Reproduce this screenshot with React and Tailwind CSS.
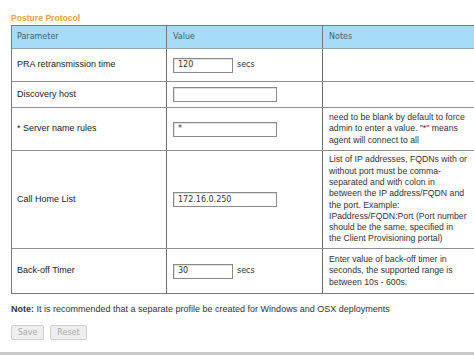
const rows = [
  { label: 'PRA retransmission time', h: 'h-[33px]', input: '120', w: 'w-[60px]', secs: true, notes: null },
  { label: 'Discovery host', h: 'h-[26px]', input: '', w: 'w-[104px]', notes: null },
  {
    label: '* Server name rules',
    h: 'h-[43px]',
    input: '*',
    w: 'w-[104px]',
    notes: 'need to be blank by default to force admin to enter a value. "*" means agent will connect to all',
  },
  {
    label: 'Call Home List',
    h: 'h-[98px]',
    input: '172.16.0.250',
    w: 'w-[104px]',
    notes:
      'List of IP addresses, FQDNs with or without port must be comma-separated and with colon in between the IP address/FQDN and the port. Example: IPaddress/FQDN:Port (Port number should be the same, specified in the\u00a0Client Provisioning portal)',
  },
  {
    label: 'Back-off Timer',
    h: 'h-[44px]',
    input: '30',
    w: 'w-[60px]',
    secs: true,
    notes: 'Enter value of back-off timer in seconds, the supported range is between 10s - 600s.',
  },
];

function Row({ row, last }) {
  return (
    <div className={`flex ${row.h} ${last ? '' : 'border-b border-[#8e8e8e]'}`}>
      <div className="w-[154px] shrink-0 flex items-center pl-[5px] text-[9px] text-[#222]">{row.label}</div>
      <div className="w-[156px] shrink-0 flex items-center pl-[6px] border-l border-[#6e6e6e]">
        <div
          className={`${row.w} h-[15px] border border-[#8a8a8a] bg-white shadow-[inset_1px_1px_0_#e0e0e0] pl-[4px] flex items-center text-[8px] text-[#333] font-['DejaVu_Sans',sans-serif]`}
        >
          {row.input}
        </div>
        {row.secs && (
          <span className="ml-[4px] text-[8px] text-[#333] font-['DejaVu_Sans',sans-serif]">secs</span>
        )}
      </div>
      <div className="w-[170px] shrink-0 flex items-center pl-[6px] pr-[23px] border-l border-[#6e6e6e] text-[8.7px] leading-[11.3px] text-[#333]">
        {row.notes && <p>{row.notes}</p>}
      </div>
    </div>
  );
}

export default function App() {
  return (
    <div className="w-[474px] h-[355px] overflow-hidden bg-white flex flex-col font-['Liberation_Sans',Arial,sans-serif]">
      <div className="h-[25px] pl-[11px] pt-[4px]">
        <span className="text-[8.6px] leading-[10px] font-bold text-[#f2a33a]">Posture Protocol</span>
      </div>

      <div className="ml-[11px] w-[480px] border-l border-t border-b border-[#7a7a7a]">
        <div className="flex h-[23px] bg-[#a6dcf6] border-b border-[#8fa6b3] text-[8px] text-[#4b5c69] font-['DejaVu_Sans',sans-serif]">
          <div className="w-[154px] shrink-0 flex items-center pl-[5px]">Parameter</div>
          <div className="w-[156px] shrink-0 flex items-center pl-[6px] border-l border-[#6e7a82]">Value</div>
          <div className="flex-1 flex items-center pl-[6px] border-l border-[#6e7a82]">Notes</div>
        </div>
        {rows.map((r, i) => (
          <Row key={r.label} row={r} last={i === rows.length - 1} />
        ))}
      </div>

      <div className="mt-[10px] pl-[11px] text-[9px] leading-[10px] text-[#333]">
        <span className="font-bold">Note:</span> It is recommended that a separate profile be created for Windows and
        OSX deployments
      </div>

      <div className="mt-[11px] pl-[11px] flex gap-[6px] font-['DejaVu_Sans',sans-serif]">
        <button className="w-[33px] h-[15px] rounded-[2px] border border-[#cfcfcf] bg-[#eeeeee] text-[8px] text-[#a9a9a9]">
          Save
        </button>
        <button className="w-[37px] h-[15px] rounded-[2px] border border-[#cfcfcf] bg-[#eeeeee] text-[8px] text-[#a9a9a9]">
          Reset
        </button>
      </div>

      <div className="flex-1" />
      <div className="h-[3px] bg-[#c9c9c9]" />
    </div>
  );
}
